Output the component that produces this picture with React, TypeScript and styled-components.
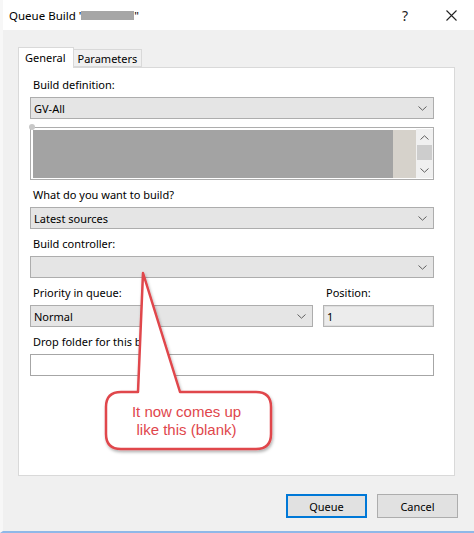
import React from "react";
import styled, { createGlobalStyle } from "styled-components";

const Global = createGlobalStyle`
  html, body { margin: 0; padding: 0; background: #f0f0f0; }
  body { font-family: "Noto Sans", "Open Sans", sans-serif; font-size: 11px; color: #000; }
  * { box-sizing: border-box; }
`;

const Window = styled.div`
  position: relative;
  width: 474px;
  height: 533px;
  display: flex;
  flex-direction: column;
  background: #f0f0f0;
  border-left: 3px solid #f7f7f7;
  border-bottom: 2px solid #8fb8e8;
  overflow: hidden;
`;

const TitleBar = styled.div`
  height: 30px;
  margin-left: -3px;
  padding-left: 9px;
  background: #fff;
  display: flex;
  align-items: center;
  font-size: 11.5px;
`;

const TitleText = styled.span`
  display: flex;
  align-items: center;
  white-space: pre;
`;

const Redact = styled.span<{ w: number; h: number }>`
  display: inline-block;
  width: ${(p) => p.w}px;
  height: ${(p) => p.h}px;
  background: #a6a6a6;
`;

const TitleButtons = styled.div`
  margin-left: auto;
  display: flex;
  align-items: center;
`;

const TitleBtn = styled.span`
  width: 46px;
  display: flex;
  justify-content: center;
  align-items: center;
  font-size: 14px;
  color: #222;
`;

const Body = styled.div`
  flex: 1;
  display: flex;
  flex-direction: column;
  padding: 17px 16px 0 15px;
`;

const TabStrip = styled.div`
  display: flex;
  align-items: flex-end;
  height: 20px;
  position: relative;
  z-index: 1;
`;

const Tab = styled.div<{ active?: boolean }>`
  height: ${(p) => (p.active ? 21 : 18)}px;
  margin-bottom: ${(p) => (p.active ? -1 : 0)}px;
  padding: ${(p) => (p.active ? "0 7px 2px 6px" : "0 4px 0 4px")};
  display: flex;
  align-items: center;
  background: ${(p) => (p.active ? "#fff" : "#f0f0f0")};
  border: 1px solid #d9d9d9;
  border-bottom: ${(p) => (p.active ? "none" : "1px solid #d9d9d9")};
  margin-left: ${(p) => (p.active ? 0 : -1)}px;
`;

const Panel = styled.div`
  height: 409px;
  margin-right: 3px;
  background: #fff;
  border: 1px solid #d9d9d9;
  padding: 9px 20px 0 11px;
  display: flex;
  flex-direction: column;
  gap: 7px;
`;

const Field = styled.div`
  display: flex;
  flex-direction: column;
`;

const Label = styled.div`
  height: 16px;
  line-height: 16px;
  padding-left: 3px;
  margin-bottom: 4px;
  white-space: nowrap;
`;

const Combo = styled.div`
  height: 22px;
  background: #e5e5e5;
  border: 1px solid #adadad;
  display: flex;
  align-items: center;
  padding: 0 6px 0 3px;
`;

const ComboText = styled.span`
  flex: 1;
`;

const ListWrap = styled.div`
  position: relative;
  margin-top: 8px;
  height: 53px;
  border: 1px solid #adadad;
  background: #fff;
  display: flex;
  padding: 2px 0 1px 2px;
`;

const Grip = styled.span`
  position: absolute;
  left: -2px;
  top: -4px;
  width: 6px;
  height: 6px;
  border-radius: 50%;
  background: #c8c8c8;
`;

const Blank = styled.div`
  flex: 1;
  background: #a3a3a3;
`;

const Beige = styled.div`
  width: 23px;
  background: #d6d2cb;
`;

const ScrollBar = styled.div`
  width: 17px;
  display: flex;
  flex-direction: column;
  align-items: center;
  background: #f0f0f0;
  margin-top: -1px;
`;

const ScrollArrow = styled.div`
  height: 16px;
  display: flex;
  align-items: center;
  justify-content: center;
`;

const Thumb = styled.div`
  width: 15px;
  height: 15px;
  background: #cdcdcd;
  margin-bottom: auto;
`;

const Row = styled.div`
  display: grid;
  grid-template-columns: 1fr 111px;
  column-gap: 10px;
`;

const TextBox = styled.div<{ disabled?: boolean }>`
  height: 22px;
  background: ${(p) => (p.disabled ? "#ececec" : "#fff")};
  border: 1px solid ${(p) => (p.disabled ? "#b4b4b4" : "#a6a6a6")};
  box-shadow: ${(p) => (p.disabled ? "inset 0 0 0 1px #dedede" : "none")};
  display: flex;
  align-items: center;
  padding-left: 3px;
`;

const ButtonRow = styled.div`
  display: flex;
  justify-content: flex-end;
  gap: 10px;
  margin-top: 18px;
`;

const Button = styled.div<{ primary?: boolean }>`
  width: 81px;
  height: 24px;
  display: flex;
  align-items: center;
  justify-content: center;
  background: #e1e1e1;
  border: ${(p) => (p.primary ? "2px solid #0078d7" : "1px solid #adadad")};
`;

const Callout = styled.div`
  position: absolute;
  left: 95px;
  top: 262px;
  width: 190px;
  height: 200px;
`;

const CalloutSvg = styled.svg`
  position: absolute;
  inset: 0;
  overflow: visible;
`;

const CalloutText = styled.div`
  position: absolute;
  left: 2px;
  top: 141px;
  width: 173px;
  text-align: center;
  font-family: "Liberation Sans", Arial, sans-serif;
  font-size: 15px;
  line-height: 18px;
  color: #e0464c;
`;

const Chevron = ({ up }: { up?: boolean }) => (
  <svg width="9" height="5" viewBox="0 0 9 5">
    <path
      d={up ? "M0.5 4.5 L4.5 0.8 L8.5 4.5" : "M0.5 0.5 L4.5 4.2 L8.5 0.5"}
      fill="none"
      stroke="#606060"
      strokeWidth="1"
    />
  </svg>
);

const ComboBox = ({ text }: { text?: string }) => (
  <Combo>
    <ComboText>{text}</ComboText>
    <Chevron />
  </Combo>
);

export default function App() {
  const ox = 95;
  const oy = 262;
  const L = 103 - ox;
  const R = 268 - ox;
  const T = 392 - oy;
  const B = 449 - oy;
  const r = 15;
  const tipX = 140 - ox;
  const tipY = 273 - oy;
  const d = `M${tipX} ${tipY} L${177 - ox} ${T} L${R - r} ${T} Q${R} ${T} ${R} ${T + r} L${R} ${B - r} Q${R} ${B} ${R - r} ${B} L${L + r} ${B} Q${L} ${B} ${L} ${B - r} L${L} ${T + r} Q${L} ${T} ${L + r} ${T} L${135 - ox} ${T} Z`;
  return (
    <>
      <Global />
      <Window>
        <TitleBar>
          <TitleText>
            Queue Build '<Redact w={53} h={9} />"
          </TitleText>
          <TitleButtons>
            <TitleBtn>?</TitleBtn>
            <TitleBtn>
              <svg width="11" height="11" viewBox="0 0 11 11">
                <path d="M0.5 0.5 L10.5 10.5 M10.5 0.5 L0.5 10.5" stroke="#222" strokeWidth="1.1" />
              </svg>
            </TitleBtn>
          </TitleButtons>
        </TitleBar>
        <Body>
          <TabStrip>
            <Tab active>General</Tab>
            <Tab>Parameters</Tab>
          </TabStrip>
          <Panel>
            <Field>
              <Label>Build definition:</Label>
              <ComboBox text="GV-All" />
              <ListWrap>
                <Grip />
                <Blank />
                <Beige />
                <ScrollBar>
                  <ScrollArrow>
                    <Chevron up />
                  </ScrollArrow>
                  <Thumb />
                  <ScrollArrow>
                    <Chevron />
                  </ScrollArrow>
                </ScrollBar>
              </ListWrap>
            </Field>
            <Field>
              <Label>What do you want to build?</Label>
              <ComboBox text="Latest sources" />
            </Field>
            <Field>
              <Label>Build controller:</Label>
              <ComboBox />
            </Field>
            <Row>
              <Field>
                <Label>Priority in queue:</Label>
                <ComboBox text="Normal" />
              </Field>
              <Field>
                <Label>Position:</Label>
                <TextBox disabled>1</TextBox>
              </Field>
            </Row>
            <Field>
              <Label>Drop folder for this build</Label>
              <TextBox />
            </Field>
          </Panel>
          <ButtonRow>
            <Button primary>Queue</Button>
            <Button>Cancel</Button>
          </ButtonRow>
        </Body>
        <Callout>
          <CalloutSvg width="190" height="200">
            <defs>
              <filter id="sh" x="-20%" y="-20%" width="140%" height="140%">
                <feDropShadow dx="1" dy="2" stdDeviation="1.5" floodColor="#000" floodOpacity="0.3" />
              </filter>
            </defs>
            <path d={d} fill="#fff" stroke="#e0464c" strokeWidth="2.5" strokeLinejoin="round" filter="url(#sh)" />
          </CalloutSvg>
          <CalloutText>
            It now comes up
            <br />
            like this (blank)
          </CalloutText>
        </Callout>
      </Window>
    </>
  );
}
